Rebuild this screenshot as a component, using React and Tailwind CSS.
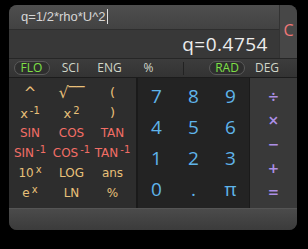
import React from "react";

const amber = "text-[#e9c079]";
const red = "text-[#f26e66]";

function Sup({ base, sup, cls }) {
  return (
    <span className={`${cls} leading-none`}>
      {base}
      <sup className="text-[10px] relative -top-[4px] ml-[2px]">{sup}</sup>
    </span>
  );
}

export default function App() {
  const leftKeys = [
    [<span className={`${amber} text-[15px]`}>^</span>, <span className={`${amber} text-[16px]`}>√‾‾</span>, <span className={`${amber} text-[13px]`}>(</span>],
    [<Sup base="x" sup="-1" cls={`${amber} text-[13px]`} />, <Sup base="x" sup="2" cls={`${amber} text-[13px]`} />, <span className={`${amber} text-[13px]`}>)</span>],
    [<span className={`${red} text-[12px]`}>SIN</span>, <span className={`${red} text-[12px]`}>COS</span>, <span className={`${red} text-[12px]`}>TAN</span>],
    [<Sup base="SIN" sup="-1" cls={`${red} text-[12px]`} />, <Sup base="COS" sup="-1" cls={`${red} text-[12px]`} />, <Sup base="TAN" sup="-1" cls={`${red} text-[12px]`} />],
    [<Sup base="10" sup="x" cls={`${amber} text-[12px]`} />, <span className={`${amber} text-[12px]`}>LOG</span>, <span className={`${amber} text-[12px]`}>ans</span>],
    [<Sup base="e" sup="x" cls={`${amber} text-[12px]`} />, <span className={`${amber} text-[12px]`}>LN</span>, <span className={`${amber} text-[12px]`}>%</span>],
  ];
  const nums = [["7", "8", "9"], ["4", "5", "6"], ["1", "2", "3"], ["0", ".", "π"]];
  const ops = ["÷", "×", "−", "+", "="];

  return (
    <div className="w-[308px] h-[249px] bg-black pt-[5px] pl-[9px]" style={{ fontFamily: '"Open Sans", "DejaVu Sans", sans-serif' }}>
      <div className="w-[288px] h-[225px] flex flex-col rounded-[8px] overflow-hidden bg-[#2c2c2c]">
        {/* display */}
        <div className="flex h-[53px]">
          <div className="flex-1 flex flex-col">
            <div className="h-[27px] bg-gradient-to-b from-[#4e4e4e] to-[#424242] border-b border-[#2e2e2e] flex items-center pl-[12px] text-[13px] text-[#d6d6d6]" style={{ fontFamily: '"Liberation Sans", Arial, sans-serif' }}>
              q=1/2*rho*U^2<span className="inline-block w-[1px] h-[15px] bg-[#e0e0e0] ml-[1px]" />
            </div>
            <div className="flex-1 bg-[#383838] flex items-center justify-end pr-[11px] text-[19px] text-[#ececec] tracking-[0.5px]">
              q=0.4754
            </div>
          </div>
          <div className="w-[18px] bg-[#474747] border-l border-[#333] flex items-center justify-center text-[16px] text-[#f07878] pb-[4px]">
            C
          </div>
        </div>
        {/* mode bar */}
        <div className="h-[20px] bg-gradient-to-b from-[#3c3c3c] to-[#333] border-t border-[#262626] border-b border-b-[#1c1c1c] flex items-center pl-[3px] text-[12px] text-[#d0d6c8]">
          <div className="w-[39px] flex justify-center">
            <span className="w-[36px] h-[14px] rounded-full border border-[#5a5a5a] bg-[#2e2e2e] flex items-center justify-center text-[#7fe046]">FLO</span>
          </div>
          <div className="w-[39px] text-center">SCI</div>
          <div className="w-[39px] text-center">ENG</div>
          <div className="w-[39px] text-center">%</div>
          <div className="w-[15px]" />
          <div className="w-[1px] h-[13px] bg-[#222]" />
          <div className="w-[23px]" />
          <div className="w-[40px] flex justify-center">
            <span className="w-[36px] h-[14px] rounded-full border border-[#5a5a5a] bg-[#2e2e2e] flex items-center justify-center text-[#7fe046]">RAD</span>
          </div>
          <div className="w-[40px] text-center">DEG</div>
        </div>
        {/* keypad */}
        <div className="flex h-[130px]">
          <div className="w-[127px] bg-[#2d2d2d] pt-[5px] grid grid-cols-[42px_41px_41px] auto-rows-[20px]" style={{ fontFamily: '"DejaVu Sans", sans-serif' }}>
            {leftKeys.flat().map((k, i) => (
              <div key={i} className="flex items-center justify-center">{k}</div>
            ))}
          </div>
          <div className="w-[114px] bg-[#232323] border-l-2 border-[#1a1a1a] border-r border-r-[#1a1a1a] pt-[3px] grid grid-cols-3 auto-rows-[31px] text-[19px] text-[#5fb4ea]">
            {nums.flat().map((n, i) => (
              <div key={i} className="flex items-center justify-center">{n}</div>
            ))}
          </div>
          <div className="flex-1 bg-[#393939] pt-[6px] flex flex-col items-center text-[18px] text-[#ac8fe6] font-semibold">
            {ops.map((o) => (
              <div key={o} className="h-[24px] flex items-center justify-center">{o}</div>
            ))}
          </div>
        </div>
        {/* bottom bar */}
        <div className="flex-1 bg-gradient-to-b from-[#4b4b4b] to-[#3b3b3b] border-t border-[#555]" />
      </div>
    </div>
  );
}
